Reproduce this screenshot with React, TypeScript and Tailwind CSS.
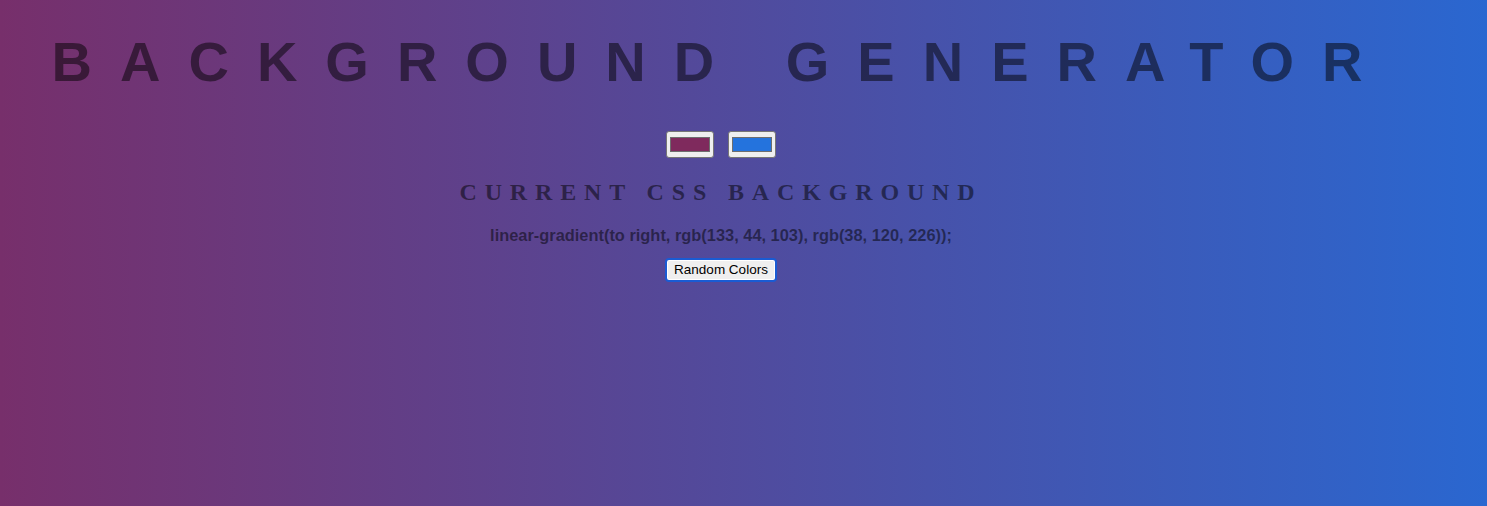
import { useState } from "react";

const start = "#852c67";
const end = "#2678e2";

export default function App() {
  const [colors] = useState({ a: start, b: end });

  return (
    <div className="min-h-screen w-full bg-[linear-gradient(to_right,#772f6b,#2a67d0)] text-black/50">
      <div className="flex flex-col items-center pr-[45px] pt-[30px]">
        <h1
          className="text-[56px] leading-[64px] font-bold uppercase tracking-[0.5em] whitespace-nowrap"
          style={{ fontFamily: "'Liberation Sans', Arial, sans-serif" }}
        >
          Background Generator
        </h1>

        {/* colour pickers */}
        <div className="mt-[37px] flex gap-[14px]">
          {[colors.a, colors.b].map((c, i) => (
            <div
              key={i}
              className="flex h-[27px] w-[48px] items-center justify-center rounded-[3px] border border-[#767676] bg-[#efefef]"
            >
              <div
                className={
                  i === 0
                    ? "h-[15px] w-[40px] border border-[#6e6e6e] bg-[#7f2a5d]"
                    : "h-[15px] w-[40px] border border-[#6e6e6e] bg-[#2473dd]"
                }
              />
            </div>
          ))}
        </div>

        <h3
          className="mt-[20px] text-[24px] leading-[28px] font-bold uppercase tracking-[7.85px] whitespace-nowrap"
          style={{ fontFamily: "'Liberation Serif', 'Times New Roman', serif" }}
        >
          Current CSS Background
        </h3>

        <p
          className="mt-[19px] text-[16.4px] leading-[20px] font-bold whitespace-nowrap"
          style={{ fontFamily: "'Liberation Sans', Arial, sans-serif" }}
        >
          linear-gradient(to right, rgb(133, 44, 103), rgb(38, 120, 226));
        </p>

        <button
          className="mt-[13px] h-[24px] rounded-[4px] border-2 border-[#1a5bd3] bg-[#efefef] px-[7px] text-[13.5px] leading-none text-black shadow-[inset_0_0_0_1px_#ffffff]"
          style={{ fontFamily: "'Liberation Sans', Arial, sans-serif" }}
        >
          Random Colors
        </button>
      </div>
    </div>
  );
}
